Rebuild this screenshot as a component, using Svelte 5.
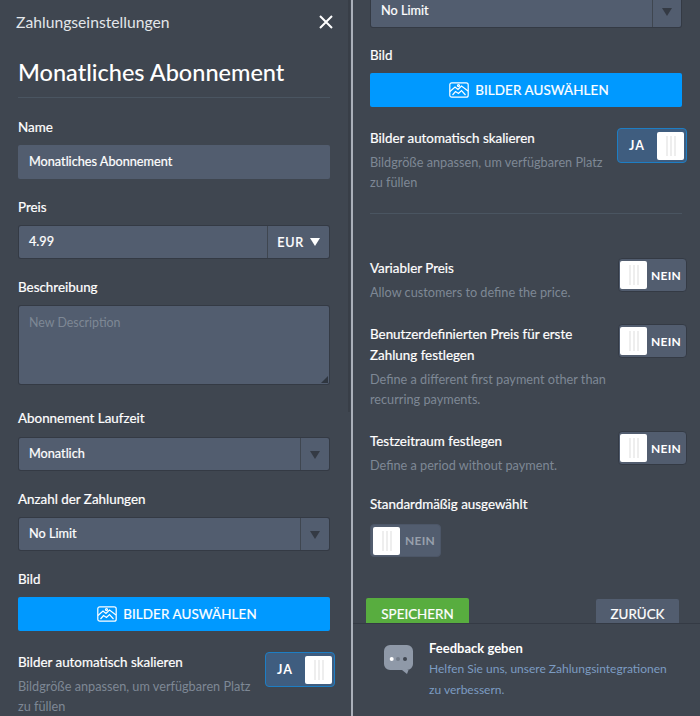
{#snippet toggleOn()}
  <div class="toggle on">
    <span class="tlabel">JA</span>
    <span class="knob"><i></i><i></i><i></i></span>
  </div>
{/snippet}

{#snippet toggleOff(dim)}
  <div class="toggle off" class:dim>
    <span class="knob"><i></i><i></i><i></i></span>
    <span class="tlabel">NEIN</span>
  </div>
{/snippet}

{#snippet select(value)}
  <div class="select">
    <span class="sval">{value}</span>
    <span class="sarrow"><b></b></span>
  </div>
{/snippet}

{#snippet imgButton()}
  <div class="imgbtn">
    <svg width="20" height="16" viewBox="0 0 20 16" fill="none" stroke="#fff" stroke-width="1.2">
      <rect x="0.8" y="0.8" width="18.4" height="14.4" rx="2"/>
      <path d="M1 9.5 L6 5 L9 7.500 L12.500 4 L19 9"/>
      <path d="M3.500 13 L6.500 9.500 L9.500 11.500 L12.500 8.500 L16.500 13"/>
      <circle cx="9.500" cy="3.600" r="1"/>
    </svg>
    <span>BILDER AUSWÄHLEN</span>
  </div>
{/snippet}

<div class="page">
  <section class="panel left">
    <header class="top">
      <span class="toptitle">Zahlungseinstellungen</span>
      <svg class="close" width="14" height="14" viewBox="0 0 14 14"><path d="M1 1 L13 13 M13 1 L1 13" stroke="#fff" stroke-width="2"/></svg>
    </header>
    <h1>Monatliches Abonnement</h1>
    <div class="rule"></div>

    <div class="lab tight-b">Name</div>
    <div class="input name">Monatliches Abonnement</div>

    <div class="lab tight-t">Preis</div>
    <div class="price">
      <span class="pval">4.99</span>
      <span class="cur">EUR <b></b></span>
    </div>

    <div class="lab">Beschreibung</div>
    <div class="area">
      <span>New Description</span>
      <svg class="grip" width="7" height="7" viewBox="0 0 7 7"><path d="M7 0 V7 H0 Z" fill="#2f3640"/></svg>
    </div>

    <div class="lab wide">Abonnement Laufzeit</div>
    {@render select("Monatlich")}

    <div class="lab">Anzahl der Zahlungen</div>
    {@render select("No Limit")}

    <div class="lab tight-b">Bild</div>
    {@render imgButton()}

    <div class="row autoscale">
      <div class="rtext">
        <div class="rtitle">Bilder automatisch skalieren</div>
        <div class="rdesc">Bildgröße anpassen, um verfügbaren Platz zu füllen</div>
      </div>
      {@render toggleOn()}
    </div>
    <div class="scrollbar"></div>
  </section>

  <section class="panel right">
    <div class="rscroll">
      <div class="cut">{@render select("No Limit")}</div>

      <div class="lab rbild tight-b">Bild</div>
      {@render imgButton()}

      <div class="row autoscale r">
        <div class="rtext">
          <div class="rtitle">Bilder automatisch skalieren</div>
          <div class="rdesc">Bildgröße anpassen, um verfügbaren Platz zu füllen</div>
        </div>
        {@render toggleOn()}
      </div>

      <div class="rule second"></div>

      <div class="row v1">
        <div class="rtext">
          <div class="rtitle">Variabler Preis</div>
          <div class="rdesc">Allow customers to define the price.</div>
        </div>
        {@render toggleOff(false)}
      </div>
      <div class="row v2">
        <div class="rtext">
          <div class="rtitle">Benutzerdefinierten Preis für erste Zahlung festlegen</div>
          <div class="rdesc">Define a different first payment other than recurring payments.</div>
        </div>
        {@render toggleOff(false)}
      </div>
      <div class="row v3">
        <div class="rtext">
          <div class="rtitle">Testzeitraum festlegen</div>
          <div class="rdesc">Define a period without payment.</div>
        </div>
        {@render toggleOff(false)}
      </div>

      <div class="rtitle std">Standardmäßig ausgewählt</div>
      {@render toggleOff(true)}

      <div class="actions">
        <div class="save">SPEICHERN</div>
        <div class="back">ZURÜCK</div>
      </div>
    </div>

    <footer class="feedback">
      <svg class="bubble" width="29" height="29" viewBox="0 0 29 29">
        <path d="M6 0 H23 A6 6 0 0 1 29 6 V19 A6 6 0 0 1 23 25 L24.500 25 L23 29 L18 25 H6 A6 6 0 0 1 0 19 V6 A6 6 0 0 1 6 0 Z" fill="#8f99a8"/>
        <circle cx="7.700" cy="14" r="2" fill="#fff"/>
        <circle cx="14" cy="14" r="2" fill="#737c89"/>
        <circle cx="21" cy="14" r="2" fill="#3f4650"/>
      </svg>
      <div class="ftext">
        <div class="ftitle">Feedback geben</div>
        <div class="fdesc">Helfen Sie uns, unsere Zahlungsintegrationen zu verbessern.</div>
      </div>
    </footer>
  </section>
</div>

<style>
  :global(body) { margin: 0; background: #3f4650; }
  .page {
    display: grid;
    grid-template-columns: 351px 349px;
    width: 700px;
    height: 716px;
    overflow: hidden;
    background: #3f4650;
    font-family: "Lato", "Liberation Sans", sans-serif;
    color: #fff;
  }
  .panel { position: relative; height: 716px; overflow: hidden; box-sizing: border-box; }
  .left { padding: 0 21px 0 18px; }
  .right { border-left: 2px solid #aab0ba; display: flex; flex-direction: column; }
  .top { display: flex; justify-content: space-between; align-items: center; height: 44px; }
  .toptitle { font-size: 15.7px; color: #e3e6ea; margin-left: -2px; }
  .close { margin-right: -3px; }
  h1 { margin: 14px 0 0; font-size: 23.5px; font-weight: 500; line-height: 28px; height: 39px; }
  .rule { height: 1px; background: #4a5561; }
  .lab { font-size: 13.4px; line-height: 16px; color: #fff; margin: 21px 0 11px; -webkit-text-stroke: .2px #fff; }
  .lab.tight-b { margin-bottom: 10px; }
  .lab.tight-t { margin-top: 20px; }
  .lab.wide { margin: 26px 0 12px; }
  .input, .price, .select, .area {
    background: #525d6f; border-radius: 2px; box-sizing: border-box; font-size: 12.7px;
  }
  .input { height: 34px; line-height: 33px; padding-left: 11px; -webkit-text-stroke: .2px #fff; }
  .price, .select { height: 32px; display: flex; align-items: stretch; box-shadow: 0 0 0 1px #343a44; margin: 0 1px; -webkit-text-stroke: .2px #fff; }
  .pval { flex: 1; padding-left: 10px; line-height: 31px; }
  .cur { width: 62px; border-left: 1px solid #3f4650; box-sizing: border-box; display: flex; align-items: center; gap: 6px; justify-content: center; font-weight: 500; font-size: 12.6px; letter-spacing: .7px; }
  .cur b { width: 0; height: 0; border-left: 5.5px solid transparent; border-right: 5.5px solid transparent; border-top: 8px solid #fff; }
  .area { height: 78px; margin: 0 1px; box-shadow: 0 0 0 1px #343a44; padding: 9px 10px; position: relative; color: #7e8895; font-size: 12.4px; }
  .grip { position: absolute; right: 1px; bottom: 1px; }
  .sval { flex: 1; padding-left: 10px; line-height: 31px; }
  .sarrow { width: 29px; box-sizing: border-box; border-left: 1px solid #3f4650; display: flex; align-items: center; justify-content: center; }
  .sarrow b { width: 0; height: 0; border-left: 5.5px solid transparent; border-right: 5.5px solid transparent; border-top: 8px solid #343a44; margin-top: 1px; }
  .imgbtn { height: 34px; background: #0099ff; border-radius: 2px; display: flex; align-items: center; justify-content: center; gap: 6px; padding-left: 6px; font-size: 13.4px; letter-spacing: .1px; -webkit-text-stroke: .2px #fff; }
  .row { display: flex; justify-content: space-between; align-items: flex-start; }
  .rtext { width: 238px; }
  .rtitle { font-size: 13.4px; line-height: 21px; color: #fff; -webkit-text-stroke: .2px #fff; }
  .rdesc { font-size: 12.7px; line-height: 20px; color: #7e8895; margin-top: 3px; }
  .autoscale { margin-top: 21px; }
  .toggle { width: 69px; height: 34px; box-sizing: border-box; border-radius: 4px; display: flex; align-items: center; padding: 2px; flex: none; font-size: 12px; font-weight: 700; letter-spacing: .3px; margin-right: -5px; }
  .on { width: 70px; height: 35px; background: #3f5d7f; border: 1.5px solid #1d7ec4; justify-content: space-between; padding: 2px 2px 2px 11px; font-size: 12.5px; letter-spacing: .9px; }
  .off { background: #525d6f; border: 1px solid #343a44; gap: 4px; padding: 2px 1px; }
  .dim { width: 71px; height: 33px; border-color: #4c5667; margin-right: 0; padding-left: 2px; gap: 5px; }
  .dim .tlabel { color: #98a0ac; }
  .knob { width: 27px; height: 28px; background: #fff; border-radius: 2px; display: flex; justify-content: center; align-items: center; gap: 2px; }
  .knob i { width: 2px; height: 20px; background: #eeeeee; }
  .scrollbar { position: absolute; top: 0; right: 1px; width: 2px; height: 412px; background: #383e47; }

  .rscroll { flex: 1; min-height: 0; overflow: hidden; padding: 0 18px 0 17px; }
  .cut { height: 32px; margin-top: -5px; }
  .rbild { margin-top: 20px; }
  .rule.second { margin-top: 21px; }
  .v1 { margin-top: 44px; }
  .v2 { margin-top: 22px; }
  .v3 { margin-top: 22px; }
  .std { margin-top: 19px; margin-bottom: 9px; }
  .actions { display: flex; justify-content: space-between; margin: 41px 3px 0 -4px; align-items: flex-start; }
  .save { width: 103px; height: 40px; background: #58ad3f; border-radius: 2px; font-size: 13.4px; text-align: center; line-height: 32px; -webkit-text-stroke: .2px #fff; }
  .back { width: 83px; height: 40px; background: #525d6f; border-radius: 2px; margin-top: 1px; font-size: 13.4px; text-align: center; line-height: 30px; -webkit-text-stroke: .2px #fff; }
  .feedback { flex: none; height: 93px; background: #3f4650; border-top: 1px solid #343a44; display: flex; box-sizing: border-box; padding: 14px 20px 0 31px; gap: 16px; }
  .bubble { flex: none; margin-top: 7px; }
  .ftitle { font-size: 13px; font-weight: 700; line-height: 20px; }
  .fdesc { font-size: 12px; line-height: 21px; color: #7c9cc2; width: 240px; }
</style>
